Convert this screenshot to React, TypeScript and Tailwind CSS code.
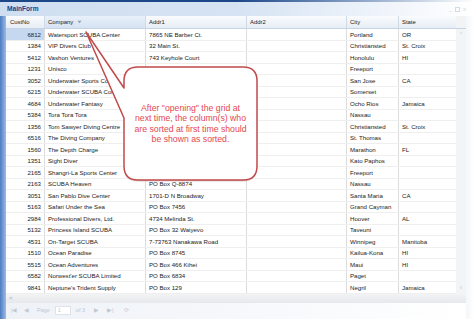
import React from "react";

const rows: [string, string, string, string, string][] = [
  ["6812", "Watersport SCUBA Center", "7865 NE Barber Ct.", "Portland", "OR"],
  ["1384", "VIP Divers Club", "32 Main St.", "Christiansted", "St. Croix"],
  ["5412", "Vashon Ventures", "743 Keyhole Court", "Honolulu", "HI"],
  ["1231", "Unisco", "", "Freeport", ""],
  ["3052", "Underwater Sports Co.", "", "San Jose", "CA"],
  ["6215", "Underwater SCUBA Company", "", "Somerset", ""],
  ["4684", "Underwater Fantasy", "", "Ocho Rios", "Jamaica"],
  ["5384", "Tora Tora Tora", "", "Nassau", ""],
  ["1356", "Tom Sawyer Diving Centre", "", "Christiansted", "St. Croix"],
  ["6516", "The Diving Company", "", "St. Thomas", ""],
  ["1560", "The Depth Charge", "", "Marathon", "FL"],
  ["1351", "Sight Diver", "", "Kato Paphos", ""],
  ["2165", "Shangri-La Sports Center", "", "Freeport", ""],
  ["2163", "SCUBA Heaven", "PO Box Q-8874", "Nassau", ""],
  ["3051", "San Pablo Dive Center", "1701-D N Broadway", "Santa Maria", "CA"],
  ["5163", "Safari Under the Sea", "PO Box 7456", "Grand Cayman", ""],
  ["2984", "Professional Divers, Ltd.", "4734 Melinda St.", "Hoover", "AL"],
  ["5132", "Princess Island SCUBA", "PO Box 32 Waiyevo", "Taveuni", ""],
  ["4531", "On-Target SCUBA", "7-73763 Nanakawa Road", "Winnipeg", "Manitoba"],
  ["1510", "Ocean Paradise", "PO Box 8745", "Kailua-Kona", "HI"],
  ["5515", "Ocean Adventures", "PO Box 466 Kihei", "Maui", "HI"],
  ["6582", "Norwest'er SCUBA Limited", "PO Box 6834", "Paget", ""],
  ["9841", "Neptune's Trident Supply", "PO Box 129", "Negril", "Jamaica"],
];

export default function App() {
  return (
    <div className="relative w-[474px] h-[326px] overflow-hidden bg-white font-['Liberation_Sans',Arial,sans-serif] text-[#222]">
      <div className="flex flex-col w-[474px]">
        {/* top dark band */}
        <div className="h-[2px] bg-gradient-to-r from-[#1b4788] via-[#1b4788] to-white" />
        {/* title bar */}
        <div className="flex h-[14px] items-center bg-gradient-to-r from-[#cfdff1] via-[#d6e3f3] to-white pl-[7px] pr-[8px]">
          <span className="text-[6.6px] font-bold text-[#15428b]">MainForm</span>
          <div className="ml-auto flex items-center gap-[3px] text-[6px] text-[#c9d3de]">
            <span>_</span>
            <span className="w-[5px] h-[5px] border border-[#d2dae4]" />
            <span>x</span>
          </div>
        </div>
        {/* body */}
        <div className="flex">
          <div className="w-[6px] bg-gradient-to-r from-[#4b7cc1] to-[#9dbbe4]" />
          <div className="flex flex-col w-[460px]">
            {/* header */}
            <div className="flex h-[13px] border-b border-[#c5d3e6] bg-gradient-to-b from-[#f9fbfd] to-[#e8eef6] text-[5.9px] text-[#222]">
              <div className="w-[39px] flex items-center pl-[4px] border-r border-[#d0dae6]">CustNo</div>
              <div className="w-[101px] flex items-center pl-[3px] border-r border-[#d0dae6] bg-gradient-to-b from-[#e8f0fa] to-[#d6e3f3]">
                Company
                <svg width="5" height="4" className="ml-[4px]" viewBox="0 0 5 4">
                  <path d="M0.5 0.8 L4.5 0.8 L2.5 3.2 Z" fill="#8e9bab" />
                </svg>
              </div>
              <div className="w-[101px] flex items-center pl-[3px] border-r border-[#d0dae6]">Addr1</div>
              <div className="w-[100px] flex items-center pl-[3px] border-r border-[#d0dae6]">Addr2</div>
              <div className="w-[52px] flex items-center pl-[3px] border-r border-[#d0dae6]">City</div>
              <div className="w-[57px] flex items-center pl-[3px]">State</div>
              <div className="w-[10px] bg-[#f1f3f5]" />
            </div>
            {/* rows + v scrollbar */}
            <div className="flex">
              <div className="flex flex-col">
                {rows.map((r, i) => (
                  <div key={i} className="flex h-[11.5px] text-[6.1px] border-b border-[#efefef]">
                    <div
                      className={
                        "w-[39px] flex items-center justify-end pr-[3px] border-r border-[#dcdcdc] " +
                        (i === 0 ? "bg-[#c5d8ef]" : "")
                      }
                    >
                      {r[0]}
                    </div>
                    <div className="w-[101px] flex items-center pl-[3px] border-r border-[#dcdcdc] whitespace-nowrap overflow-hidden">
                      {r[1]}
                    </div>
                    <div className="w-[101px] flex items-center pl-[3px] border-r border-[#dcdcdc] whitespace-nowrap overflow-hidden">
                      {r[2]}
                    </div>
                    <div className="w-[100px] border-r border-[#dcdcdc]" />
                    <div className="w-[52px] flex items-center pl-[3px] border-r border-[#dcdcdc] whitespace-nowrap overflow-hidden">
                      {r[3]}
                    </div>
                    <div className="w-[57px] flex items-center pl-[3px] whitespace-nowrap overflow-hidden">
                      {r[4]}
                    </div>
                  </div>
                ))}
              </div>
              <div className="w-[10px] flex flex-col items-center justify-between bg-[#f3f4f6] py-[2px] text-[5px] text-[#c8ccd2]">
                <span>^</span>
                <span>v</span>
              </div>
            </div>
            {/* h scrollbar */}
            <div className="flex h-[9px] items-center bg-gradient-to-b from-[#f2f3f5] to-[#e6e8eb] pl-[3px] text-[6px] text-[#9aa0a8]">
              &lt;
            </div>
            {/* pager */}
            <div className="flex h-[16px] items-center gap-[5px] bg-gradient-to-r from-[#eef2f7] via-[#f6f8fb] to-white pl-[5px] text-[5.5px] text-[#c3c8cf]">
              <span className="w-[8px]">|◀</span>
              <span className="w-[8px]">◀</span>
              <span>Page</span>
              <span className="w-[16px] h-[9px] border border-[#dfe3e8] bg-white flex items-center pl-[2px]">1</span>
              <span>of 3</span>
              <span className="ml-[4px] w-[8px]">▶</span>
              <span className="w-[8px]">▶|</span>
              <span className="ml-[4px]">⟳</span>
            </div>
          </div>
          <div className="w-[8px] bg-gradient-to-r from-[#f4f6f8] to-white" />
        </div>
      </div>

      {/* callout shape */}
      <svg className="absolute left-0 top-0" width="474" height="326" viewBox="0 0 474 326">
        <path
          d="M138 68.5 H243 Q257 68.5 257 82.5 V167.5 Q257 181.5 243 181.5 H138 Q124 181.5 124 167.5 V119.5 L87 33.5 L124 89.5 V82.5 Q124 68.5 138 68.5 Z"
          fill="#7a3a3a"
          opacity="0.25"
        />
        <path
          d="M138 67 H243 Q257 67 257 81 V166 Q257 180 243 180 H138 Q124 180 124 166 V118 L86 32 L124 88 V81 Q124 67 138 67 Z"
          fill="white"
          stroke="#c24a4a"
          strokeWidth="1.5"
          strokeLinejoin="round"
        />
      </svg>
      <div className="absolute left-[124px] top-[67px] w-[133px] h-[113px] flex items-center justify-center text-center text-[8.7px] leading-[10.3px] text-[#e2474f] font-['Liberation_Sans',Arial,sans-serif]">
        <div>
          After "opening" the grid at
          <br />
          next time, the column(s) who
          <br />
          are sorted at first time should
          <br />
          be shown as sorted.
        </div>
      </div>
    </div>
  );
}
